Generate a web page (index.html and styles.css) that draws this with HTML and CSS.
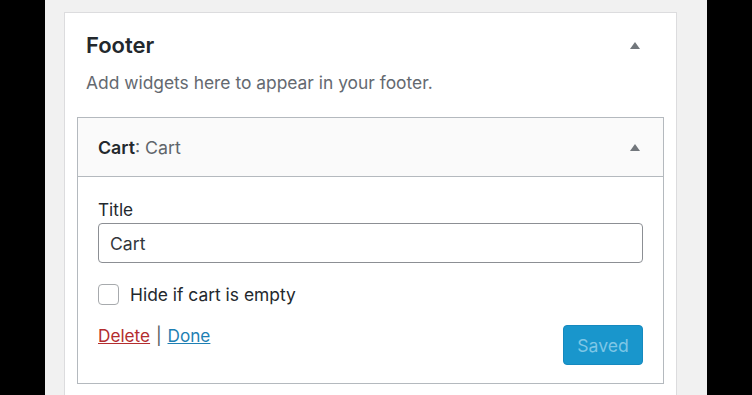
FILE: index.html
```html
<!DOCTYPE html>
<html lang="en">
<head>
<meta charset="utf-8">
<title>Footer widgets</title>
<link rel="stylesheet" href="styles.css">
</head>
<body>
<div class="stage">
  <section class="sidebar">
    <div class="sidebar-head">
      <h2 class="sidebar-title">Footer</h2>
      <span class="caret" aria-hidden="true"></span>
    </div>
    <p class="sidebar-desc">Add widgets here to appear in your footer.</p>
    <div class="widget">
      <div class="widget-top">
        <h3 class="widget-title"><strong>Cart</strong><span class="widget-sub">: Cart</span></h3>
        <span class="caret" aria-hidden="true"></span>
      </div>
      <div class="widget-body">
        <label class="field-label" for="title">Title</label>
        <input class="text-input" id="title" type="text" value="Cart">
        <label class="check-row">
          <span class="checkbox"></span>
          <span class="check-label">Hide if cart is empty</span>
        </label>
        <div class="actions">
          <div class="links">
            <a class="link-delete" href="#">Delete</a> <span class="sep">|</span> <a class="link-done" href="#">Done</a>
          </div>
          <button class="btn-saved" type="button" disabled>Saved</button>
        </div>
      </div>
    </div>
  </section>
</div>
</body>
</html>
```

FILE: styles.css
```css
* { box-sizing: border-box; }

html, body {
  margin: 0;
  padding: 0;
  background: #000;
  height: 395px;
  overflow: hidden;
}

body {
  display: flex;
  justify-content: center;
  font-family: Inter, "Liberation Sans", Arial, sans-serif;
  color: #23282d;
}

.stage {
  width: 662px;
  height: 395px;
  background: #f1f1f1;
  padding: 12px 30px 0 19px;
}

.sidebar {
  background: #fff;
  border: 1px solid #dcdcde;
  height: 400px;
  padding-top: 17px;
}

.sidebar-head {
  display: flex;
  align-items: center;
  justify-content: space-between;
  padding: 0 36px 0 21px;
}

.sidebar-title {
  margin: 0;
  font-size: 22px;
  line-height: 30px;
  font-weight: 600;
  color: #23282d;
}

.caret {
  width: 0;
  height: 0;
  border-left: 5.5px solid transparent;
  border-right: 5.5px solid transparent;
  border-bottom: 7px solid #72777c;
}

.sidebar-desc {
  margin: 11px 0 0;
  padding: 0 21px;
  font-size: 17.4px;
  line-height: 24px;
  color: #646970;
}

.widget {
  margin: 22px 12px 0;
  border: 1px solid #b4b9be;
}

.widget-top {
  display: flex;
  align-items: center;
  justify-content: space-between;
  height: 59px;
  padding: 0 23px 0 20px;
  background: #fafafa;
  border-bottom: 1px solid #b4b9be;
}

.widget-title {
  margin: 0;
  font-size: 17.8px;
  font-weight: 400;
  color: #23282d;
}

.widget-title strong { font-weight: 600; }
.widget-sub { color: #5f656b; }

.widget-body {
  padding: 23px 20px 18px;
  display: flex;
  flex-direction: column;
}

.field-label {
  font-size: 17.2px;
  line-height: 20px;
  color: #23282d;
}

.text-input {
  margin-top: 3px;
  height: 40px;
  width: 100%;
  border: 1px solid #8c8f94;
  border-radius: 4px;
  padding: 0 11px;
  font-family: inherit;
  font-size: 17.6px;
  color: #32373c;
  background: #fff;
}

.check-row {
  margin-top: 21px;
  display: flex;
  align-items: center;
  gap: 11px;
}

.checkbox {
  width: 21px;
  height: 21px;
  border: 1px solid #a7aaad;
  border-radius: 4px;
  background: #fff;
}

.check-label {
  font-size: 17.4px;
  color: #23282d;
}

.actions {
  margin-top: 21px;
  display: flex;
  justify-content: space-between;
  align-items: flex-start;
}

.links {
  font-size: 17.2px;
  line-height: 20px;
  color: #50575e;
}

.link-delete { color: #b32d2e; text-decoration: underline; }
.link-done { color: #1e7fb3; text-decoration: underline; }
.sep { padding: 0 1px; color: #50575e; }

.btn-saved {
  margin-top: -1px;
  width: 80px;
  height: 40px;
  border: 1px solid #1589bf;
  border-radius: 4px;
  background: #1996cc;
  color: #7ec6e6;
  font-family: inherit;
  font-size: 17.6px;
  padding: 0;
}
```
